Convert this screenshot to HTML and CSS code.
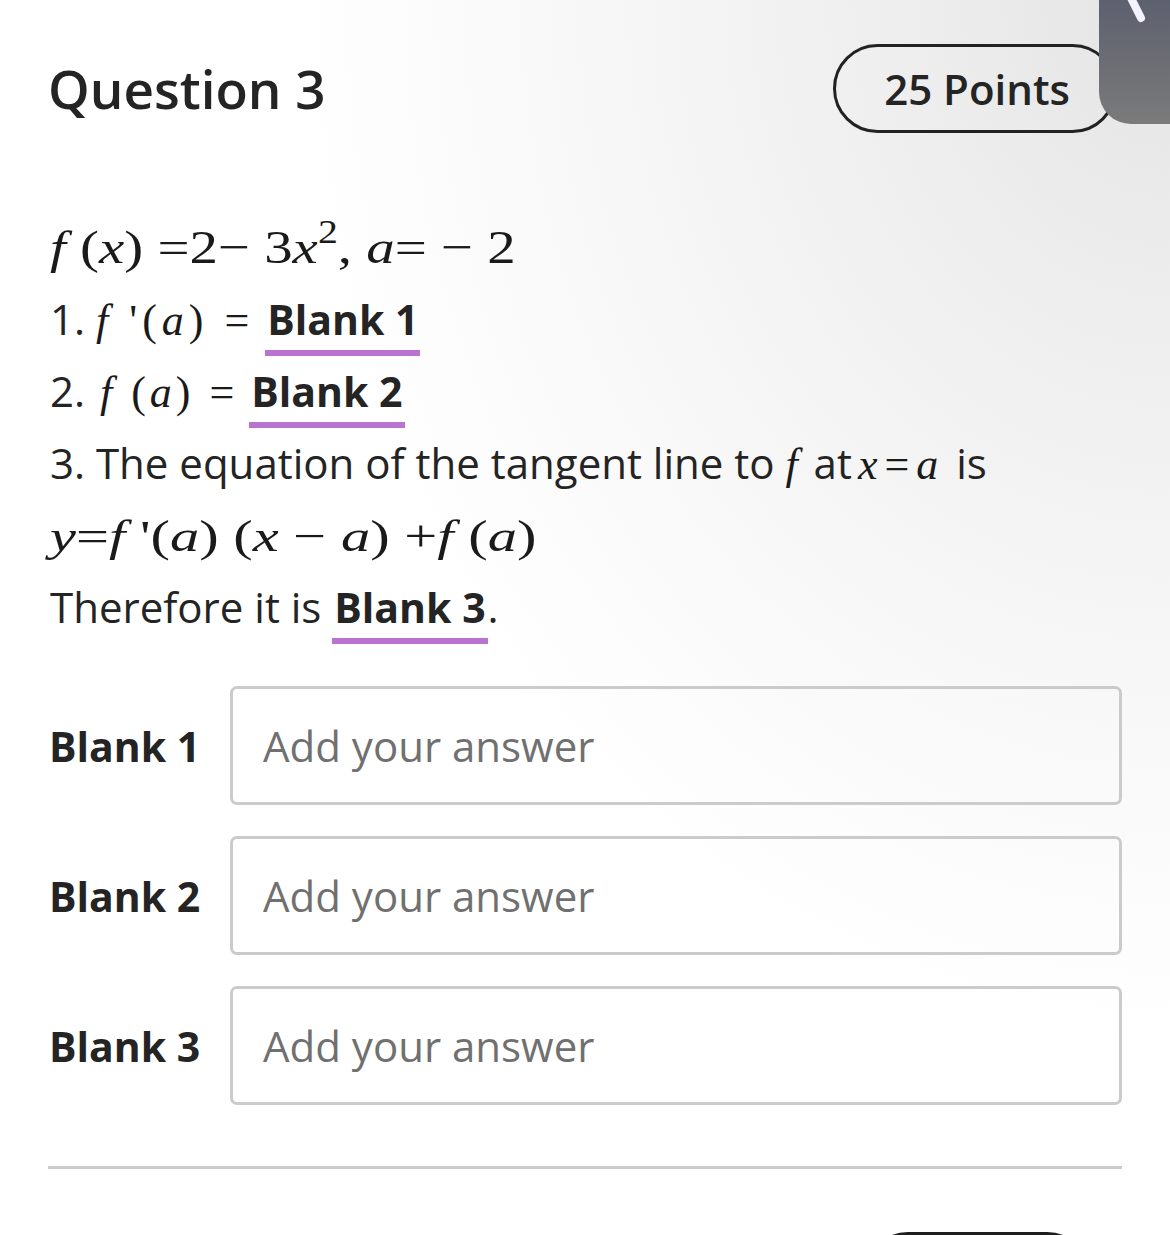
FILE: index.html
```html
<!DOCTYPE html>
<html lang="en">
<head>
<meta charset="utf-8">
<title>Question 3</title>
<link rel="stylesheet" href="styles.css">
</head>
<body>
<div class="page">
  <header class="qhead">
    <h1 class="qtitle">Question 3</h1>
    <div class="points">25 Points</div>
  </header>

  <div class="qbody">
    <div class="line"><span class="mblock m1"><i>f</i> (<i>x</i>) =2&minus; 3<i>x</i><sup>2</sup>, <i>a</i>= &minus; 2</span></div>
    <div class="line">1. <span class="mi"><i>f</i> '(<i>a</i>) =</span> <b class="blank">Blank 1</b></div>
    <div class="line">2. <span class="mi m3"><i>f</i> (<i>a</i>) =</span> <b class="blank">Blank 2</b></div>
    <div class="line">3. The equation of the tangent line to <span class="mi"><i>f</i></span> at<span class="mi m4"><i>x</i>=<i>a</i></span> is</div>
    <div class="line"><span class="mblock m5"><i>y</i>=<i>f</i> '(<i>a</i>) (<i>x</i> &minus; <i>a</i>) +<i>f</i> (<i>a</i>)</span></div>
    <div class="line">Therefore it is <b class="blank">Blank 3</b>.</div>
  </div>

  <div class="answers">
    <label class="arow"><span class="alabel">Blank 1</span><input class="ainput" type="text" placeholder="Add your answer"></label>
    <label class="arow"><span class="alabel">Blank 2</span><input class="ainput" type="text" placeholder="Add your answer"></label>
    <label class="arow"><span class="alabel">Blank 3</span><input class="ainput" type="text" placeholder="Add your answer"></label>
  </div>

  <hr class="divider">

  <div class="footer"><button class="nextbtn" type="button"></button></div>
</div>

<div class="overlay">
  <svg class="overlay-mark" width="71" height="40" viewBox="0 0 71 40"><line x1="31" y1="-4" x2="42" y2="18" stroke="#f3f3ff" stroke-width="8" stroke-linecap="round"/></svg>
</div>
</body>
</html>
```

FILE: styles.css
```css
html, body {
  margin: 0;
  height: 100%;
  overflow: hidden;
}
body {
  background: radial-gradient(ellipse 1100px 1300px at 100% 0%, #e4e4e4 0%, #eeeeee 25%, #f8f8f8 55%, #ffffff 80%);
  font-family: "Open Sans", "Liberation Sans", sans-serif;
  color: #242424;
}
.page {
  padding: 44px 48px 0 50px;
}
.qhead {
  display: flex;
  justify-content: space-between;
  align-items: center;
  height: 89px;
}
.qtitle {
  margin: 0 0 0 -2px;
  font-weight: 600;
  font-size: 53px;
  line-height: 1;
  color: #242424;
}
.points {
  height: 89px;
  box-sizing: border-box;
  border: 3px solid #222222;
  border-radius: 45px;
  padding: 0 44px 0 48px;
  display: flex;
  align-items: center;
  font-weight: 600;
  font-size: 42px;
  margin-right: 5px;
}
.qbody {
  margin-top: 78px;
  font-size: 42px;
  line-height: 72px;
}
.line {
  white-space: nowrap;
}
.mblock, .mi {
  font-family: "Liberation Serif", "Times New Roman", serif;
  line-height: 1;
  color: #1a1a1a;
}
.mblock {
  display: inline-block;
  transform-origin: 0 50%;
}
.m1 {
  font-size: 47px;
  transform: scaleX(1.21);
}
.m5 {
  font-size: 45px;
  transform: scaleX(1.3);
}
.mi {
  font-size: 44px;
  letter-spacing: 5px;
}
.m3 {
  padding-left: 4px;
  letter-spacing: 4px;
}
.m4 {
  padding-left: 6px;
  letter-spacing: 7px;
}
.mblock sup {
  font-size: 0.7em;
  line-height: 0;
  vertical-align: 0.6em;
}
.blank {
  font-weight: 700;
  font-size: 41px;
  border-bottom: 6px solid #b973d1;
  padding: 0 2px 3px;
}
.answers {
  margin-top: 43px;
  display: flex;
  flex-direction: column;
  gap: 31px;
}
.arow {
  display: grid;
  grid-template-columns: 180px 1fr;
  align-items: center;
}
.alabel {
  margin-left: -1px;
  font-weight: 700;
  font-size: 41px;
  color: #242424;
}
.ainput {
  height: 119px;
  width: 100%;
  box-sizing: border-box;
  border: 3px solid #cbcbcb;
  border-radius: 7px;
  padding: 0 0 0 30px;
  margin: 0;
  font-family: "Open Sans", "Liberation Sans", sans-serif;
  font-size: 42px;
  color: #242424;
  background: transparent;
  outline: none;
}
.ainput::placeholder {
  color: #707070;
  opacity: 1;
}
.divider {
  margin: 61px 0 0 -2px;
  border: 0;
  height: 3px;
  background: #cbcbcb;
}
.footer {
  margin-top: 63px;
  display: flex;
  justify-content: flex-end;
  padding-right: 30px;
}
.nextbtn {
  width: 229px;
  height: 90px;
  border: 0;
  border-radius: 45px;
  background: #1e1e1e;
}
.overlay {
  position: absolute;
  top: 0;
  right: 0;
  width: 71px;
  height: 124px;
  border-bottom-left-radius: 32px;
  background: linear-gradient(#5d606e, #7b7b7b);
}
.overlay-mark {
  display: block;
}
```
